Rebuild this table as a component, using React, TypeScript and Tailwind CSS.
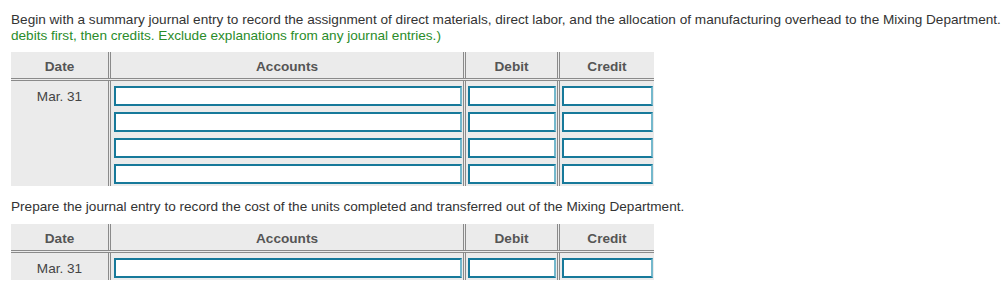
import React from 'react';

const font = { fontFamily: '"Liberation Sans", Arial, sans-serif' };

function EntryInput() {
  return (
    <input
      type="text"
      className="block h-[20px] w-full border-2 border-[#17799a] border-r-[#74b8cc] bg-white outline-none"
    />
  );
}

function JournalTable({ rows }: { rows: number }) {
  const lines = Array.from({ length: rows });
  return (
    <div className="w-[643px] bg-[#ebebeb] text-[13.6px]">
      <div className="flex h-[29px] border-b-[3px] border-double border-[#8a8a8a] font-bold text-[#555]">
        <div className="flex w-[100px] items-center justify-center border-r-[3px] border-double border-[#8a8a8a] pt-[3px]">Date</div>
        <div className="flex w-[355px] items-center justify-center border-r-[3px] border-double border-[#8a8a8a] pt-[3px]">Accounts</div>
        <div className="flex w-[94px] items-center justify-center border-r-[3px] border-double border-[#8a8a8a] pt-[3px]">Debit</div>
        <div className="flex w-[94px] items-center justify-center pt-[3px]">Credit</div>
      </div>
      <div className="flex">
        <div className="w-[100px] border-r-[3px] border-double border-[#8a8a8a] pt-[8px] text-center text-[#444]">Mar. 31</div>
        <div className="flex w-[355px] flex-col gap-[6px] border-r-[3px] border-double border-[#8a8a8a] pb-[2px] pl-[3px] pr-[1px] pt-[5px]">
          {lines.map((_, i) => <EntryInput key={i} />)}
        </div>
        <div className="flex w-[94px] flex-col gap-[6px] border-r-[3px] border-double border-[#8a8a8a] pb-[2px] pl-[2px] pr-[1px] pt-[5px]">
          {lines.map((_, i) => <EntryInput key={i} />)}
        </div>
        <div className="flex w-[94px] flex-col gap-[6px] pb-[2px] pl-[2px] pr-[1px] pt-[5px]">
          {lines.map((_, i) => <EntryInput key={i} />)}
        </div>
      </div>
    </div>
  );
}

export default function App() {
  return (
    <div className="min-h-[297px] bg-white pl-[11px] pt-[12px] text-[13.6px] leading-[16px] text-[#333]" style={font}>
      <p className="whitespace-nowrap">
        Begin with a summary journal entry to record the assignment of direct materials, direct labor, and the allocation of manufacturing overhead to the Mixing Department.
      </p>
      <p className="text-[#2a8c2a]">debits first, then credits. Exclude explanations from any journal entries.)</p>
      <div className="mt-[8px]">
        <JournalTable rows={4} />
      </div>
      <p className="mt-[13px]">Prepare the journal entry to record the cost of the units completed and transferred out of the Mixing Department.</p>
      <div className="mt-[9px]">
        <JournalTable rows={1} />
      </div>
    </div>
  );
}
